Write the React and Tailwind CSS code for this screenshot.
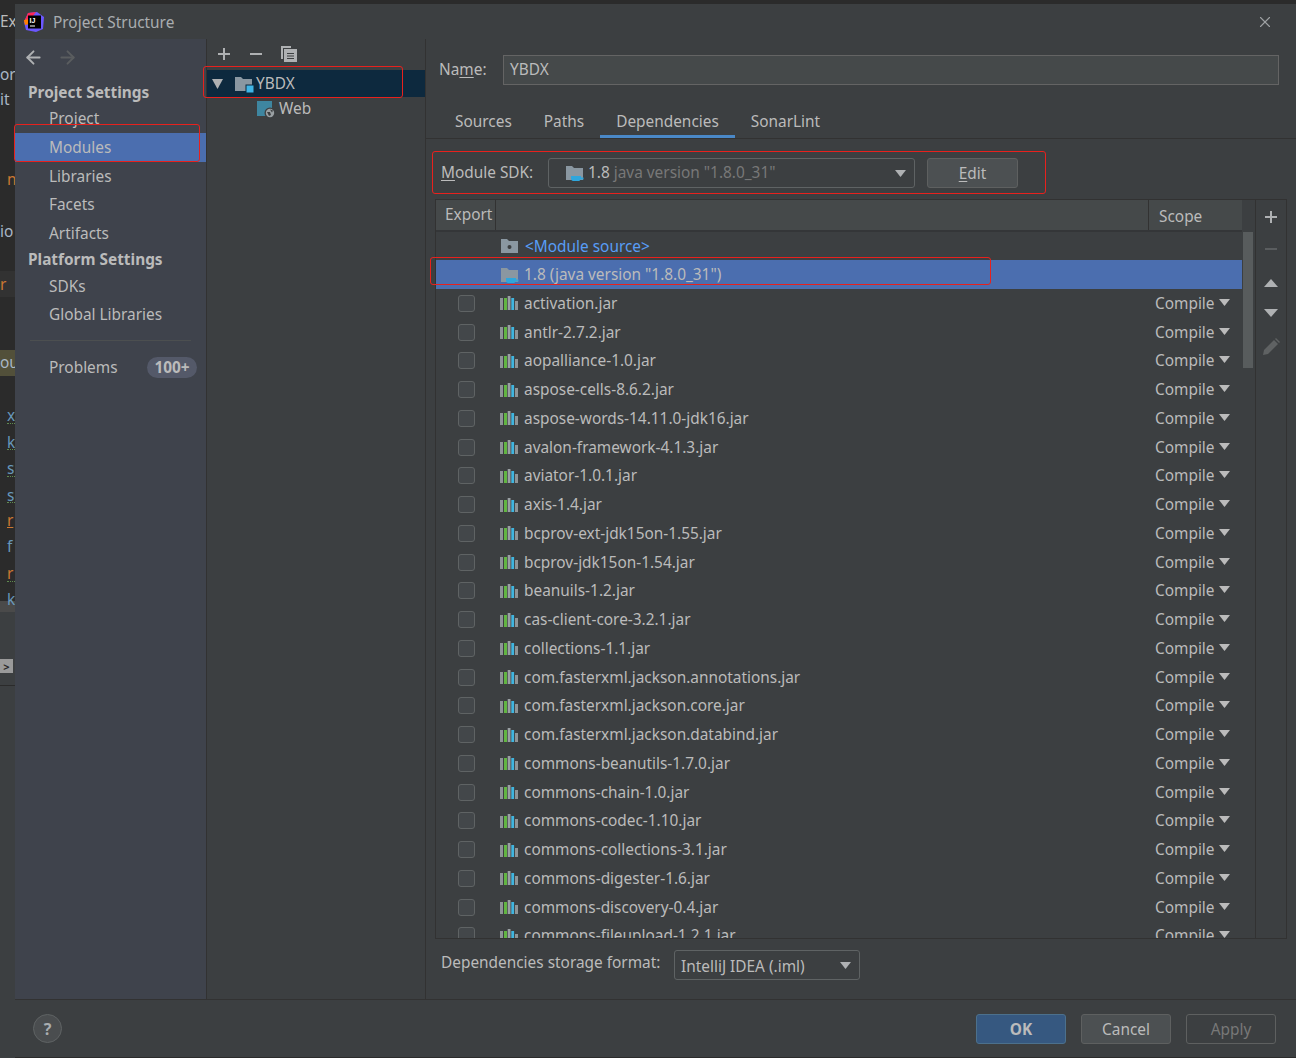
import React from "react";
import { ArrowLeft, ArrowRight, X } from "lucide-react";

const jars = ["activation.jar","antlr-2.7.2.jar","aopalliance-1.0.jar","aspose-cells-8.6.2.jar","aspose-words-14.11.0-jdk16.jar","avalon-framework-4.1.3.jar","aviator-1.0.1.jar","axis-1.4.jar","bcprov-ext-jdk15on-1.55.jar","bcprov-jdk15on-1.54.jar","beanuils-1.2.jar","cas-client-core-3.2.1.jar","collections-1.1.jar","com.fasterxml.jackson.annotations.jar","com.fasterxml.jackson.core.jar","com.fasterxml.jackson.databind.jar","commons-beanutils-1.7.0.jar","commons-chain-1.0.jar","commons-codec-1.10.jar","commons-collections-3.1.jar","commons-digester-1.6.jar","commons-discovery-0.4.jar","commons-fileupload-1.2.1.jar"];

const JarIcon = () => (
  <svg width="18" height="16" viewBox="0 0 18 16" className="shrink-0">
    <rect x="0" y="3" width="3" height="12" fill="#8e9497" />
    <rect x="4" y="3" width="3" height="12" fill="#62b543" />
    <rect x="7.7" y="1" width="2.8" height="14" fill="#9aa0a3" />
    <rect x="11.3" y="3" width="2.8" height="12" fill="#40b6e0" />
    <rect x="15" y="6" width="3" height="9" fill="#8e9497" />
  </svg>
);

const Folder = ({ cup, dot, square, color = "#8a97a1" }) => (
  <svg width="20" height="18" viewBox="0 0 20 18" className="shrink-0">
    <path d="M1 2h6l2 2h9v12H1z" fill={color} />
    {dot && <circle cx="9.5" cy="10" r="2" fill="#3c3f41" />}
    {square && <rect x="12" y="10" width="8" height="8" fill="#3fb5e6" stroke="#0d293e" strokeWidth="1" />}
    {cup && <path d="M6 12h10v1.5h2.5v2H15.5c-.6 1-1.2 1.5-2 1.5H8c-1 0-1.6-.8-2-2z" fill="#2fa6dc" />}
  </svg>
);

const Caret = ({ className = "", color = "#afb1b3", up }) => (
  <svg width="11" height="7" viewBox="0 0 12 7" preserveAspectRatio="none" className={className}>
    <path d={up ? "M6 0l6 7H0z" : "M0 0h12L6 7z"} fill={color} />
  </svg>
);

const Plus = ({ color = "#afb1b3" }) => (
  <svg width="14" height="14" viewBox="0 0 14 14"><path d="M6 1h2v5h5v2H8v5H6V8H1V6h5z" fill={color} /></svg>
);
const Minus = ({ color = "#afb1b3" }) => (
  <svg width="14" height="14" viewBox="0 0 14 14"><rect x="1" y="6" width="12" height="2" fill={color} /></svg>
);

const NavItem = ({ children, active, shift }) => (
  <div className={`h-[28.6px] pl-[34px] flex items-center ${shift ? "pt-[2px]" : ""} ${active ? "bg-[#4b6eaf]" : ""}`}>{children}</div>
);

const Tab = ({ children, active }) => (
  <div className={`px-4 h-full flex items-center ${active ? "border-b-[3px] border-[#4a88c7] pt-[8px]" : "pt-[5px]"}`}>{children}</div>
);

const Row = ({ children, selected, check, icon, scope, className = "text-[#bbbbbb]" }) => (
  <div className={`h-[28.75px] flex items-center shrink-0 ${selected ? "bg-[#4b6eaf]" : ""}`}>
    <div className="w-[64px] pl-[22px] shrink-0">
      {check && <div className="w-[17px] h-[17px] rounded-[3px] border border-[#5f6364] bg-[#43474a]" />}
    </div>
    <div className="w-[24px] shrink-0">{icon}</div>
    <div className={`flex-1 whitespace-nowrap ${className}`}>{children}</div>
    {scope && (
      <div className="w-[94px] pl-[7px] flex items-center gap-[4px] text-[#bbbbbb] shrink-0">
        Compile <Caret className="mb-[2px]" color="#bbbbbb" />
      </div>
    )}
  </div>
);

const RedBox = ({ className }) => (
  <div className={`absolute border border-[#e8211d] rounded-[3px] pointer-events-none ${className}`} />
);

const Frag = ({ className, children }) => (
  <div className={`absolute leading-none ${className}`}>{children}</div>
);

const Squiggle = ({ top }) => (
  <div className={`absolute left-[7px] w-[8px] border-b border-dotted border-[#5f8a4f] ${top}`} />
);

export default function App() {
  return (
    <div className="relative w-[1296px] h-[1058px] overflow-hidden flex bg-[#2b2b2b] text-[15.4px] text-[#bbbbbb]" style={{ fontFamily: '"Noto Sans", sans-serif' }}>
      {/* Editor behind the dialog */}
      <div className="relative w-[15px] shrink-0 h-full overflow-hidden text-[#a9b7c6] bg-[#2b2b2b]">
        <Frag className="left-0 top-[14px] text-[#bbbbbb]">Ex</Frag>
        <Frag className="left-0 top-[67px]">or</Frag>
        <Frag className="left-0 top-[92px]">it</Frag>
        <Frag className="left-[7px] top-[172px] text-[#cc7832]">n</Frag>
        <Frag className="left-0 top-[224px]">io</Frag>
        <div className="absolute left-0 top-[271px] h-[26px] w-full bg-[#323232]" />
        <Frag className="left-0 top-[277px] text-[#cc7832]">r</Frag>
        <div className="absolute left-0 top-[350px] h-[26px] w-full bg-[#52503a]" />
        <Frag className="left-0 top-[355px]">ou</Frag>
        <Frag className="left-[7px] top-[408px] text-[#6897bb]">x</Frag>
        <Squiggle top="top-[423px]" />
        <Frag className="left-[7px] top-[435px] text-[#6897bb]">k</Frag>
        <Squiggle top="top-[449px]" />
        <Frag className="left-[7px] top-[461px] text-[#6897bb]">s</Frag>
        <Squiggle top="top-[476px]" />
        <Frag className="left-[7px] top-[488px] text-[#6897bb]">s</Frag>
        <Squiggle top="top-[502px]" />
        <Frag className="left-[7px] top-[513px] text-[#cc7832] underline">r</Frag>
        <Frag className="left-[7px] top-[539px] text-[#6897bb]">f</Frag>
        <Frag className="left-[7px] top-[566px] text-[#cc7832]">r</Frag>
        <Squiggle top="top-[581px]" />
        <div className="absolute left-0 top-[601px] h-[11px] w-full bg-[#4a4a4a]" />
        <Frag className="left-[7px] top-[592px] text-[#6897bb]">k</Frag>
        <div className="absolute left-0 top-[612px] bottom-0 w-full bg-[#3c3f41]" />
        <div className="absolute left-0 top-[659px] h-[14px] w-[13px] bg-[#9a9a9a] flex items-center justify-center text-[#2b2b2b] text-[11px] font-bold leading-none">&gt;</div>
        <div className="absolute left-0 top-[685px] h-px w-full bg-[#2b2b2b]" />
      </div>

      {/* Dialog */}
      <div className="mt-[4px] h-[1053px] flex-1 flex flex-col bg-[#3c3f41] min-w-0">
        {/* Title bar */}
        <div className="h-[35px] shrink-0 flex items-center pl-[9px] pr-[22px]">
          <svg width="20" height="20" viewBox="0 0 20 20" className="shrink-0">
            <path d="M4 1l9-1 7 5-1 12-7 3-10-2-2-8z" fill="#6b57ff" />
            <path d="M4 1l8-1-7 9-5 1z" fill="#fe2857" />
            <path d="M0 8l5-1v5l-4 1z" fill="#ff8100" />
            <rect x="4" y="3.5" width="13" height="13" fill="#000" />
            <rect x="6" y="13.5" width="5" height="1" fill="#fff" />
            <text x="5.5" y="11" fontSize="7" fontWeight="700" fill="#fff" fontFamily="Liberation Sans, sans-serif">IJ</text>
          </svg>
          <div className="ml-[9px] pt-[3px] text-[#a9adb0]">Project Structure</div>
          <X size={18} strokeWidth={1.5} className="ml-auto mt-[1px] text-[#9fa2a4]" />
        </div>

        {/* Body */}
        <div className="flex-1 flex min-h-0">
          {/* Sidebar */}
          <div className="w-[192px] shrink-0 bg-[#3f434c] border-r border-[#323232]">
            <div className="h-[36px] flex items-center pl-[8px] gap-[13px]">
              <ArrowLeft size={21} strokeWidth={2.2} className="text-[#afb1b3]" />
              <ArrowRight size={21} strokeWidth={2.2} className="text-[#5a5d5f]" />
            </div>
            <div className="pl-[13px] h-[30px] pt-[6px] flex items-center font-bold text-[#bbbbbb]">Project Settings</div>
            <div className="h-[28px] pl-[34px] flex items-center">Project</div>
            <NavItem active>Modules</NavItem>
            <NavItem shift>Libraries</NavItem>
            <NavItem>Facets</NavItem>
            <NavItem>Artifacts</NavItem>
            <div className="pl-[13px] h-[24px] flex items-center font-bold text-[#bbbbbb]">Platform Settings</div>
            <NavItem shift>SDKs</NavItem>
            <NavItem>Global Libraries</NavItem>
            <div className="mx-[15px] mt-[11px] h-px bg-[#4c4f50]" />
            <div className="pl-[34px] pr-[9px] mt-[15px] flex items-center justify-between">
              <span>Problems</span>
              <span className="w-[50px] h-[21px] rounded-full bg-[#545969] flex items-center justify-center font-bold">100+</span>
            </div>
          </div>

          {/* Module tree */}
          <div className="w-[219px] shrink-0 border-r border-[#323232] flex flex-col">
            <div className="h-[30px] flex items-center pl-[10px] gap-[18px] shrink-0">
              <Plus />
              <Minus />
              <svg width="16" height="16" viewBox="0 0 16 16">
                <path d="M0 0h10v2H2v11H0z" fill="#afb1b3" />
                <path d="M3 3h13v13H3z" fill="#afb1b3" />
                <path d="M6 7h7v1H6zm0 2.5h7v1H6zm0 2.5h7v1H6z" fill="#3c3f41" />
              </svg>
            </div>
            <div className="h-[27px] bg-[#0d293e] flex items-center pl-[5px] shrink-0 mt-px">
              <Caret className="w-[11px] h-[10px]" color="#afb1b3" />
              <div className="ml-[11px]"><Folder square /></div>
              <span className="ml-[2px]">YBDX</span>
            </div>
            <div className="h-[24px] flex items-center pl-[50px]">
              <svg width="19" height="19" viewBox="0 0 19 19" className="shrink-0">
                <rect x="0" y="1" width="15" height="15" fill="#3e86a0" />
                <circle cx="13" cy="13" r="5.5" fill="#3c3f41" />
                <circle cx="13" cy="13" r="4.2" fill="#9aa0a3" />
                <path d="M10 12h3l1 3-2 1zM13 9.5l3 1-1 2z" fill="#3c3f41" />
              </svg>
              <span className="ml-[3px]">Web</span>
            </div>
          </div>

          {/* Detail */}
          <div className="flex-1 flex flex-col min-w-0">
            <div className="h-[61px] pt-[16px] pl-[13px] pr-[17px] flex items-start shrink-0">
              <div className="w-[64px] h-[30px] flex items-center">
                <span>Na<span className="underline underline-offset-2">m</span>e:</span>
              </div>
              <div className="flex-1 h-[30px] bg-[#45494a] border border-[#646464] flex items-center pl-[6px]">YBDX</div>
            </div>
            <div className="h-[39px] pl-[13px] border-b border-[#323232] flex items-stretch shrink-0">
              <Tab>Sources</Tab>
              <Tab>Paths</Tab>
              <Tab active>Dependencies</Tab>
              <Tab>SonarLint</Tab>
            </div>
            <div className="mt-[19px] h-[30px] pl-[15px] flex items-center shrink-0">
              <div className="w-[107px]"><span className="underline underline-offset-2">M</span>odule SDK:</div>
              <div className="w-[367px] h-[30px] rounded-[3px] border border-[#5f6364] bg-[#3c3f41] flex items-center pl-[16px] pr-[8px]">
                <Folder cup />
                <span className="ml-[3px]">1.8</span>
                <span className="ml-[4px] text-[#787878]">java version "1.8.0_31"</span>
                <Caret className="ml-auto" />
              </div>
              <div className="ml-[12px] w-[91px] h-[30px] rounded-[3px] border border-[#5e6060] bg-[#4c5052] flex items-center justify-center pt-[2px]">
                <span><span className="underline underline-offset-2">E</span>dit</span>
              </div>
            </div>

            {/* Table */}
            <div className="mt-[11px] ml-[9px] mr-[9px] h-[740px] shrink-0 border border-[#323232] flex overflow-hidden">
              <div className="flex-1 flex flex-col min-w-0">
                <div className="h-[31.5px] shrink-0 bg-[#45494a] border-b-2 border-[#343638] flex items-center">
                  <div className="w-[60px] h-full pl-[9px] border-r border-[#323232] flex items-center">Export</div>
                  <div className="flex-1" />
                  <div className="w-[94px] h-full pl-[10px] pt-[3px] border-l border-[#323232] flex items-center">Scope</div>
                </div>
                <div className="flex-1 overflow-hidden flex flex-col">
                  <Row icon={<Folder dot />} className="text-[#589df6] pl-[1px] pt-[2px]">&lt;Module source&gt;</Row>
                  <Row selected icon={<Folder cup />}>1.8 (java version "1.8.0_31")</Row>
                  {jars.map((j) => (
                    <Row key={j} check scope icon={<JarIcon />}>{j}</Row>
                  ))}
                </div>
              </div>
              <div className="w-[13px] shrink-0 pt-[32px] pl-px">
                <div className="w-[10px] h-[136px] bg-[#585c5d]" />
              </div>
              <div className="w-[31px] shrink-0 border-l border-[#323232] flex flex-col items-center pt-[10px]">
                <Plus />
                <div className="mt-[18px]"><Minus color="#5a5d5f" /></div>
                <Caret up className="mt-[23px] w-[14px] h-[8px]" />
                <Caret className="mt-[22px] w-[14px] h-[8px]" />
                <svg width="17" height="17" viewBox="0 0 17 17" className="mt-[21px]">
                  <path d="M0 17l1-5L11 2l4 4L5 16zM12 1l1-1 4 4-1 1z" fill="#5f6263" />
                </svg>
              </div>
            </div>

            <div className="mt-[11px] pl-[15px] flex items-start shrink-0">
              <span className="w-[233px] shrink-0 whitespace-nowrap pt-[1px]">Dependencies storage format:</span>
              <div className="w-[186px] h-[30px] rounded-[3px] border border-[#5f6364] flex items-center pl-[6px] pr-[8px]">
                <span className="mt-[3px]">IntelliJ IDEA (.iml)</span>
                <Caret className="ml-auto" />
              </div>
            </div>
          </div>
        </div>

        {/* Footer */}
        <div className="h-[58px] shrink-0 border-t border-[#323232] flex items-center pl-[18px] pr-[20px]">
          <div className="w-[29px] h-[29px] rounded-full border border-[#5f6364] bg-[#4a4d4f] flex items-center justify-center font-bold text-[#a9adb0] text-[16px]">?</div>
          <div className="ml-auto w-[90px] h-[30px] rounded-[3px] border border-[#4c708c] bg-[#365880] flex items-center justify-center pt-[2px] font-bold text-[#bbbbbb]">OK</div>
          <div className="ml-[15px] w-[90px] h-[30px] rounded-[3px] border border-[#5e6060] bg-[#4c5052] flex items-center justify-center pt-[2px]">Cancel</div>
          <div className="ml-[15px] w-[90px] h-[30px] rounded-[3px] border border-[#5e6060] flex items-center justify-center pt-[2px] text-[#787878]">Apply</div>
        </div>
      </div>

      {/* Annotations */}
      <RedBox className="left-[14px] top-[124px] w-[186px] h-[38px]" />
      <RedBox className="left-[203px] top-[66px] w-[200px] h-[32px]" />
      <RedBox className="left-[432px] top-[151px] w-[614px] h-[43px]" />
      <RedBox className="left-[430px] top-[257px] w-[561px] h-[28px]" />
    </div>
  );
}
